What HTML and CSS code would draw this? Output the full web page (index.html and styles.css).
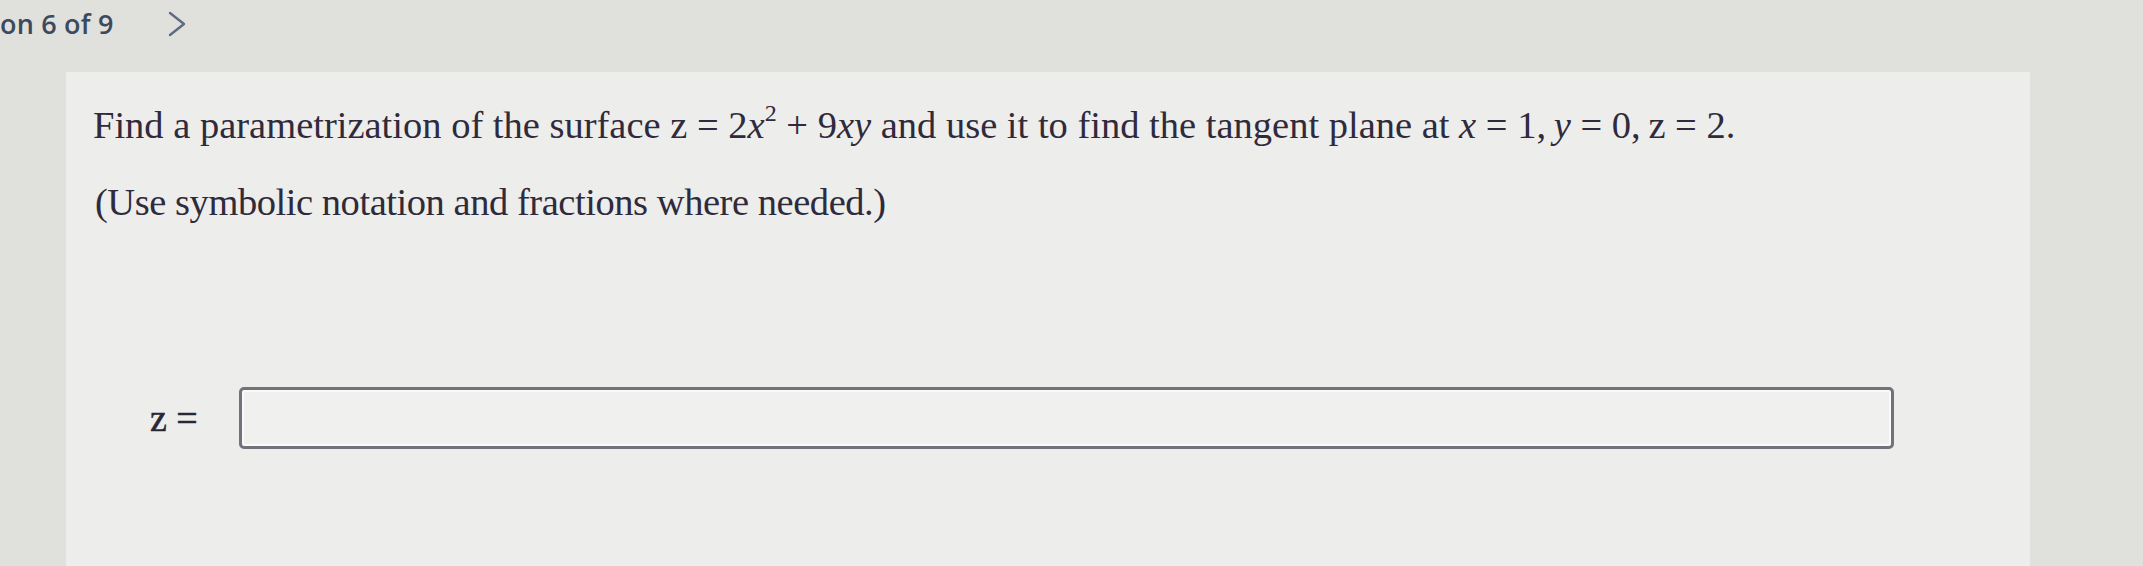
FILE: index.html
```html
<!DOCTYPE html>
<html>
<head>
<meta charset="utf-8">
<link rel="stylesheet" href="styles.css">
</head>
<body>
<div class="topbar">
  <span class="qnum">on 6 of 9</span>
  <svg class="chev" width="22" height="28" viewBox="0 0 22 28"><path d="M4 3 L18 14 L4 25" fill="none" stroke="#5d6b80" stroke-width="2.4" stroke-linecap="round" stroke-linejoin="round"/></svg>
</div>
<div class="card">
  <p class="line1">Find a parametrization of the surface <span class="m">z</span> = 2<i>x</i><sup>2</sup> + 9<i>xy</i> and use it to find the tangent plane at <i>x</i> = 1,&#8201;<i>y</i> = 0,&#8201;<span class="m">z</span> = 2.</p>
  <p class="line2">(Use symbolic notation and fractions where needed.)</p>
  <div class="answer">
    <span class="label">z =</span>
    <div class="input"></div>
  </div>
</div>
</body>
</html>
```
FILE: styles.css
```css
html, body {
  margin: 0;
  padding: 0;
  background: #e0e0dd;
  height: 566px;
  overflow: hidden;
}
.topbar {
  display: flex;
  align-items: center;
  height: 48px;
  font-family: "Open Sans", "Liberation Sans", sans-serif;
}
.qnum {
  font-size: 27px;
  font-weight: 600;
  color: #3b4a5e;
  letter-spacing: 0.2px;
  margin-top: -2px;
}
.chev {
  margin-left: 52px;
}
.card {
  margin: 24px 113px 0 66px;
  background: #ededeb;
  height: 520px;
  padding: 30px 0 0 27px;
  box-sizing: border-box;
  font-family: "Liberation Serif", "Times New Roman", serif;
  color: #2f2a3c;
}
.line1, .line2 {
  margin: 0;
  font-size: 38.5px;
  line-height: 46px;
}
.line2 {
  margin-top: 31px;
  margin-left: 2px;
  letter-spacing: -0.45px;
}
sup {
  font-size: 24px;
  vertical-align: 17px;
  line-height: 0;
}
.answer {
  display: flex;
  align-items: center;
  margin-top: 162px;
  margin-left: 57px;
}
.label {
  font-size: 38px;
  width: 89px;
  color: #2a2636;
  -webkit-text-stroke: 0.5px #2a2636;
}
.input {
  width: 1649px;
  height: 56px;
  border: 3px solid #74717a;
  border-radius: 5px;
  background: #f0f0ee;
  box-shadow: inset 0 0 0 2px #fafaf9;
}
```
